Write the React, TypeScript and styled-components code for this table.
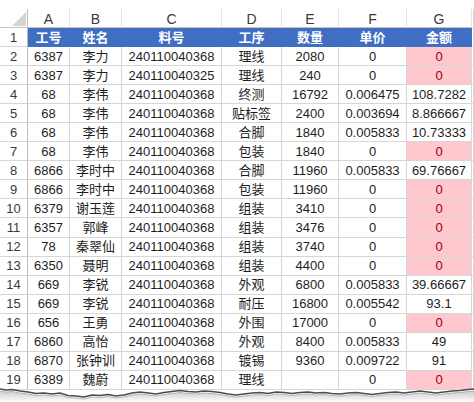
import React from "react";
import styled, { createGlobalStyle } from "styled-components";

const Global = createGlobalStyle`
  html, body { margin: 0; padding: 0; background: #ffffff; }
  body { font-family: "Liberation Sans", "Noto Sans CJK SC", sans-serif; overflow: hidden; }
`;

const Page = styled.div`
  position: relative;
  width: 474px;
  height: 402px;
  overflow: hidden;
  background: #ffffff;
`;

const Sheet = styled.div`
  display: grid;
  grid-template-columns: 28px 42px 52px 100px 60px 57px 68px 65px 2px;
  grid-template-rows: 19px;
  grid-auto-rows: 19.06px;
  padding-top: 9px;
  font-family: "Liberation Sans", "Noto Sans CJK SC", sans-serif;
  font-size: 13px;
  color: #1e1e1e;
`;

type Kind = "corner" | "col" | "row" | "head" | "data" | "edge";

const Cell = styled.div<{ $kind: Kind; $pink?: boolean }>`
  display: flex;
  align-items: center;
  justify-content: center;
  white-space: nowrap;
  overflow: hidden;
  box-sizing: border-box;
  line-height: 1;
  border-right: 1px solid
    ${(p) =>
      p.$kind === "row" || p.$kind === "corner"
        ? "#bdbdbd"
        : p.$kind === "col"
        ? "#e4e4e4"
        : p.$kind === "head"
        ? "#3f6ec2"
        : "#d6d6d6"};
  border-bottom: 1px solid
    ${(p) =>
      p.$kind === "col" || p.$kind === "corner"
        ? "#c4c4c4"
        : p.$kind === "head"
        ? "#3f6ec2"
        : "#d6d6d6"};
  background: ${(p) =>
    p.$kind === "head" ? "#3f6ec2" : p.$pink ? "#ffc7ce" : "#ffffff"};
  color: ${(p) =>
    p.$kind === "head"
      ? "#ffffff"
      : p.$kind === "col" || p.$kind === "row"
      ? "#3a3a3a"
      : p.$pink
      ? "#9c0006"
      : "#1e1e1e"};
  font-weight: ${(p) => (p.$kind === "head" ? 700 : 400)};
  font-size: ${(p) => (p.$kind === "col" ? "14px" : "13px")};
  padding-top: ${(p) => (p.$kind === "col" ? "1px" : "0")};
`;

const CornerMark = styled.div`
  width: 0;
  height: 0;
  border-left: 14px solid transparent;
  border-bottom: 14px solid #d4d4d4;
  align-self: flex-end;
  margin-left: 10px;
  margin-bottom: 1px;
`;

const Tear = styled.svg`
  position: absolute;
  left: 0;
  top: 380px;
  width: 474px;
  height: 22px;
`;

type Row = [string, string, string, string, string, string, string, boolean];

const rows: Row[] = [
  ["6387", "李力", "240110040368", "理线", "2080", "0", "0", true],
  ["6387", "李力", "240110040325", "理线", "240", "0", "0", true],
  ["68", "李伟", "240110040368", "终测", "16792", "0.006475", "108.7282", false],
  ["68", "李伟", "240110040368", "贴标签", "2400", "0.003694", "8.866667", false],
  ["68", "李伟", "240110040368", "合脚", "1840", "0.005833", "10.73333", false],
  ["68", "李伟", "240110040368", "包装", "1840", "0", "0", true],
  ["6866", "李时中", "240110040368", "合脚", "11960", "0.005833", "69.76667", false],
  ["6866", "李时中", "240110040368", "包装", "11960", "0", "0", true],
  ["6379", "谢玉莲", "240110040368", "组装", "3410", "0", "0", true],
  ["6357", "郭峰", "240110040368", "组装", "3476", "0", "0", true],
  ["78", "秦翠仙", "240110040368", "组装", "3740", "0", "0", true],
  ["6350", "聂明", "240110040368", "组装", "4400", "0", "0", true],
  ["669", "李锐", "240110040368", "外观", "6800", "0.005833", "39.66667", false],
  ["669", "李锐", "240110040368", "耐压", "16800", "0.005542", "93.1", false],
  ["656", "王勇", "240110040368", "外围", "17000", "0", "0", true],
  ["6860", "高怡", "240110040368", "外观", "8400", "0.005833", "49", false],
  ["6870", "张钟训", "240110040368", "镀锡", "9360", "0.009722", "91", false],
  ["6389", "魏蔚", "240110040368", "理线", "", "0", "0", true],
];

const letters = ["A", "B", "C", "D", "E", "F", "G"];
const heads = ["工号", "姓名", "料号", "工序", "数量", "单价", "金额"];

const tearPts: [number, number][] = [
  [0, 9], [6, 10], [12, 9.5], [20, 11], [28, 12], [36, 13.5], [44, 13], [52, 14], [60, 13],
  [68, 15.5], [76, 16], [84, 17], [92, 15], [100, 15.5], [108, 14.5], [116, 16], [124, 15],
  [132, 13], [140, 12], [148, 13], [156, 14], [164, 12.5], [172, 11.5], [180, 10.5],
  [188, 11.5], [196, 12], [204, 11], [212, 11.5], [220, 12.5], [228, 14], [236, 15],
  [244, 14], [252, 13], [260, 12.5], [268, 13.5], [276, 12], [284, 12.5], [292, 13.5],
  [300, 12.5], [308, 12], [316, 13], [324, 12.5], [332, 13.5], [340, 14], [348, 13],
  [356, 12.5], [364, 13.5], [372, 14.5], [380, 13.5], [388, 12.5], [396, 12], [404, 13],
  [412, 12], [420, 11], [428, 12], [436, 13], [444, 12], [452, 11], [460, 10.5], [468, 9.5],
  [474, 9],
];

const line = tearPts.map(([x, y]) => `${x},${y}`).join(" ");
const shadowLine = tearPts.map(([x, y]) => `${x},${y + 2}`).join(" ");

export default function App() {
  return (
    <Page>
      <Global />
      <Sheet>
        <Cell $kind="corner">
          <CornerMark />
        </Cell>
        {letters.map((l) => (
          <Cell key={l} $kind="col">
            {l}
          </Cell>
        ))}
        <Cell $kind="edge" />
        <Cell $kind="row">1</Cell>
        {heads.map((h) => (
          <Cell key={h} $kind="head">
            {h}
          </Cell>
        ))}
        <Cell $kind="edge" />
        {rows.map((r, i) => (
          <React.Fragment key={i}>
            <Cell $kind="row">{i + 2}</Cell>
            {r.slice(0, 6).map((v, j) => (
              <Cell key={j} $kind="data">
                {v as string}
              </Cell>
            ))}
            <Cell $kind="data" $pink={r[7]}>
              {r[6]}
            </Cell>
            <Cell $kind="edge" />
          </React.Fragment>
        ))}
      </Sheet>
      <Tear viewBox="0 0 474 22" preserveAspectRatio="none">
        <defs>
          <linearGradient id="sh" x1="0" y1="0" x2="0" y2="1">
            <stop offset="0" stopColor="#9a9a9a" stopOpacity="0.9" />
            <stop offset="1" stopColor="#ffffff" stopOpacity="1" />
          </linearGradient>
        </defs>
        <polygon points={`${line} 474,22 0,22`} fill="#ffffff" />
        <polygon points={`${shadowLine} 474,22 0,22`} fill="url(#sh)" opacity="0.55" />
        <polyline points={line} fill="none" stroke="#4a4a4a" strokeWidth="1.6" />
        <polyline points={shadowLine} fill="none" stroke="#9a9a9a" strokeWidth="1" opacity="0.7" />
      </Tear>
    </Page>
  );
}
